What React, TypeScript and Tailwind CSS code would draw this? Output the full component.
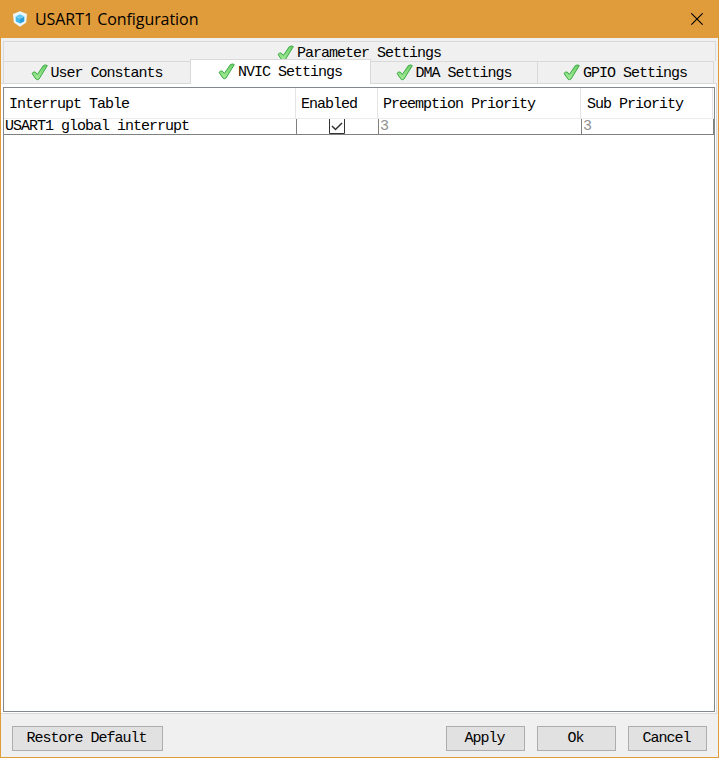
import React from 'react';

const MONO = "font-['Liberation_Mono',monospace] text-[15px] leading-4 tracking-[-1.002px]";

const CheckIcon: React.FC = () => (
  <svg width="18" height="17" viewBox="0 0 18 17" className="shrink-0">
    <defs>
      <linearGradient id="tick" x1="0" y1="0" x2="0" y2="1">
        <stop offset="0" stopColor="#6fd06a" />
        <stop offset="1" stopColor="#a4ec98" />
      </linearGradient>
    </defs>
    <path
      d="M1 9.4 Q2.4 7.6 4.2 8 L6.4 10.4 L12.3 1.7 Q14.4 0.2 16.3 1.6 L8 15 Q6.2 16.5 4.8 14.9 Z"
      fill="url(#tick)"
      stroke="#3aa843"
      strokeWidth="1"
      strokeLinejoin="round"
    />
  </svg>
);

const CubeIcon: React.FC = () => (
  <svg width="16" height="16" viewBox="0 0 16 16" className="shrink-0">
    <path d="M8 0.3 L15 3 L14.2 11.5 L8 15.8 L1.8 11.5 L1 3 Z" fill="#e9f7fc" />
    <path d="M8 3.2 L12.2 5.2 L8 7.2 L3.8 5.2 Z" fill="#62c8ef" />
    <path d="M3.6 5.4 L8 7.4 V12.6 L3.8 10.4 Z" fill="#45b7e8" />
    <path d="M12.4 5.4 L8 7.4 V12.6 L12.2 10.4 Z" fill="#2d9fd8" />
  </svg>
);

interface TabProps {
  label: string;
  className: string;
}

const Tab: React.FC<TabProps> = ({ label, className }) => (
  <div className={`flex shrink-0 items-center justify-center gap-[2px] border-[#d9d9d9] pr-[1px] ${className}`}>
    <CheckIcon />
    <span className="whitespace-pre pt-[2px]">{label}</span>
  </div>
);

const Button: React.FC<TabProps> = ({ label, className }) => (
  <button className={`h-[25px] shrink-0 border border-[#adadad] bg-[#e1e1e1] pr-[2px] pt-[1px] ${className}`}>{label}</button>
);

export default function App() {
  return (
    <div className={`flex h-[758px] w-[719px] flex-col overflow-hidden border-x border-b border-[#e09b3a] bg-[#f0f0f0] text-black ${MONO}`}>
      <header className="flex h-[38px] shrink-0 items-center bg-[#e09b3a] pr-[15px] pl-[11px]">
        <CubeIcon />
        <h1 className="ml-[7px] flex-1 font-['Open_Sans',sans-serif] text-[16px] leading-5 tracking-[-0.06px]">USART1 Configuration</h1>
        <svg width="12" height="12" viewBox="0 0 12 12">
          <path d="M0.3 0.3 L11.7 11.7 M11.7 0.3 L0.3 11.7" stroke="#000" strokeWidth="1.1" />
        </svg>
      </header>

      <nav className="flex h-[45px] shrink-0 flex-col pt-[3px] pl-[2px]">
        <Tab label="Parameter Settings" className="h-[20px] w-[713px] border-x border-t pt-[3px]" />
        <div className="flex h-[22px] items-end">
          <Tab label="User Constants" className="h-[22px] w-[187px] border-t border-l" />
          <Tab label="NVIC Settings" className="z-10 -mb-[1px] h-[25px] w-[181px] border-x border-t bg-white pb-[1px]" />
          <Tab label="DMA Settings" className="h-[22px] w-[166px] border-t" />
          <Tab label="GPIO Settings" className="h-[22px] w-[177px] border-x border-t" />
        </div>
      </nav>

      <main className="flex h-[631px] w-[716px] shrink-0 flex-col border-y border-r border-[#d9d9d9] bg-white px-[2px] pt-[3px] pb-[1px]">
        <section className="flex w-[712px] flex-1 flex-col border border-[#828790]">
          <div className="flex h-[31px] shrink-0 items-center border-b border-[#ebebeb]">
            <div className="flex h-full w-[292px] items-center border-r border-[#e5e5e5] pl-[5px] pt-[4px]">Interrupt Table</div>
            <div className="flex h-full w-[82px] items-center border-r border-[#e5e5e5] pl-[5px] pt-[4px]">Enabled</div>
            <div className="flex h-full w-[203px] items-center border-r border-[#e5e5e5] pl-[5px] pt-[4px]">Preemption Priority</div>
            <div className="flex h-full w-[132px] items-center border-r border-[#e5e5e5] pl-[6px] pt-[4px]">Sub Priority</div>
          </div>
          <div className="flex h-[16px] shrink-0 border-b border-[#808080]">
            <div className="w-[293px] border-r border-[#808080] pl-[1px]">USART1 global interrupt</div>
            <div className="flex w-[82px] border-r border-[#808080] pl-[32px]">
              <svg width="16" height="15" viewBox="0 0 16 15">
                <path d="M0.5 0 V14.5 H15.5 V0" fill="none" stroke="#333" />
                <path d="M3 7 L6.5 10.5 L13 4" fill="none" stroke="#333" strokeWidth="1.5" />
              </svg>
            </div>
            <div className="w-[203px] border-r border-[#808080] pl-[1px] text-[#909090]">3</div>
            <div className="w-[132px] border-r border-[#808080] pl-[1px] text-[#909090]">3</div>
          </div>
        </section>
      </main>

      <footer className="flex flex-1 items-start pt-[12px] pr-[11px] pl-[11px]">
        <Button label="Restore Default" className="w-[151px]" />
        <div className="ml-auto flex gap-3">
          <Button label="Apply" className="w-[79px]" />
          <Button label="Ok" className="w-[79px]" />
          <Button label="Cancel" className="w-[79px]" />
        </div>
      </footer>
    </div>
  );
}
